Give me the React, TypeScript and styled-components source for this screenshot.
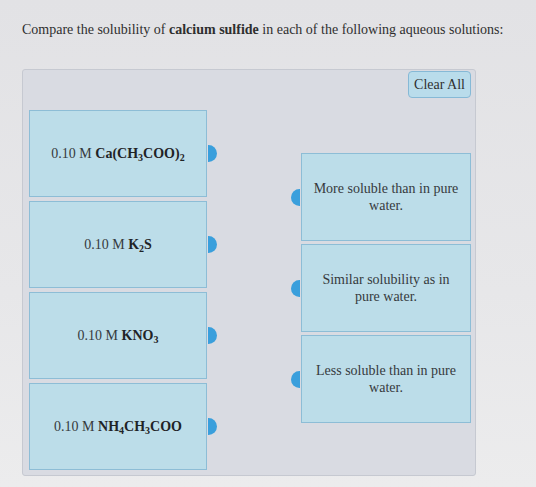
import styled, { createGlobalStyle } from 'styled-components';

const GlobalStyle = createGlobalStyle`
  html, body {
    margin: 0;
    padding: 0;
    background: #e3e3e6;
    font-family: 'Liberation Serif', 'Times New Roman', serif;
    color: #333;
  }
`;

type Option = { id: string; label: React.ReactNode };

const solutions: Option[] = [
  {
    id: 'ca',
    label: (
      <>
        0.10 M <b>Ca(CH<sub>3</sub>COO)<sub>2</sub></b>
      </>
    ),
  },
  {
    id: 'k2s',
    label: (
      <>
        0.10 M <b>K<sub>2</sub>S</b>
      </>
    ),
  },
  {
    id: 'kno3',
    label: (
      <>
        0.10 M <b>KNO<sub>3</sub></b>
      </>
    ),
  },
  {
    id: 'nh4',
    label: (
      <>
        0.10 M <b>NH<sub>4</sub>CH<sub>3</sub>COO</b>
      </>
    ),
  },
];

const targets: Option[] = [
  { id: 'more', label: 'More soluble than in pure water.' },
  { id: 'same', label: 'Similar solubility as in pure water.' },
  { id: 'less', label: 'Less soluble than in pure water.' },
];

const App = () => {
  return (
    <Page>
      <GlobalStyle />
      <Prompt>
        Compare the solubility of <b>calcium sulfide</b> in each of the following aqueous
        solutions:
      </Prompt>

      <Panel>
        <Toolbar>
          <ClearButton type="button">Clear All</ClearButton>
        </Toolbar>

        <Columns>
          <Column offset={12} gap={4}>
            {solutions.map((s) => (
              <Row key={s.id}>
                <Card width={178} height={87}>
                  <span>{s.label}</span>
                </Card>
                <Knob side="right" />
              </Row>
            ))}
          </Column>

          <Column offset={55} gap={3}>
            {targets.map((t) => (
              <Row key={t.id}>
                <Knob side="left" />
                <Card width={170} height={88}>
                  <TargetText>{t.label}</TargetText>
                </Card>
              </Row>
            ))}
          </Column>
        </Columns>
      </Panel>
    </Page>
  );
};

const Page = styled.div`
  padding: 22px 0 0 22px;
  min-height: 487px;
  box-sizing: border-box;
  background: linear-gradient(180deg, #e2e2e5 0%, #e7e7e9 60%, #ececed 100%);
`;

const Prompt = styled.p`
  margin: 0 0 31px;
  font-size: 14px;
  line-height: 16px;
  color: #2f2f2f;

  b {
    font-weight: bold;
  }
`;

const Panel = styled.div`
  width: 454px;
  box-sizing: border-box;
  padding: 1px 4px 5px 6px;
  background: #d9dbe2;
  border: 1px solid #c6c9d1;
  border-radius: 3px;
`;

const Toolbar = styled.div`
  display: flex;
  justify-content: flex-end;
`;

const ClearButton = styled.button`
  height: 27px;
  padding: 0 5px;
  font-family: inherit;
  font-size: 14px;
  color: #2f2f2f;
  background: #b9dceb;
  border: 1px solid #86b9d6;
  border-radius: 4px;
`;

const Columns = styled.div`
  display: flex;
  justify-content: space-between;
  align-items: flex-start;
`;

const Column = styled.div<{ offset: number; gap: number }>`
  display: flex;
  flex-direction: column;
  gap: ${(p) => p.gap}px;
  margin-top: ${(p) => p.offset}px;
`;

const Row = styled.div`
  display: flex;
  align-items: center;
`;

const Card = styled.div<{ width: number; height: number }>`
  width: ${(p) => p.width}px;
  height: ${(p) => p.height}px;
  box-sizing: border-box;
  display: flex;
  align-items: center;
  justify-content: center;
  padding: 0 8px;
  text-align: center;
  font-size: 14px;
  line-height: 17px;
  color: #363a3d;
  background: #bcdde9;
  border: 1px solid #8dbdd6;

  b {
    font-weight: bold;
    color: #1f2326;
  }

  sub {
    font-size: 10px;
    line-height: 0;
    vertical-align: -3px;
  }
`;

const TargetText = styled.span`
  display: block;
  max-width: 150px;
`;

const Knob = styled.div<{ side: 'left' | 'right' }>`
  width: 9px;
  height: 17px;
  background: #3a9fdc;
  border-radius: ${(p) => (p.side === 'right' ? '0 9px 9px 0' : '9px 0 0 9px')};
  margin: ${(p) => (p.side === 'right' ? '0 0 0 1px' : '0 1px 0 0')};
`;

export default App;
